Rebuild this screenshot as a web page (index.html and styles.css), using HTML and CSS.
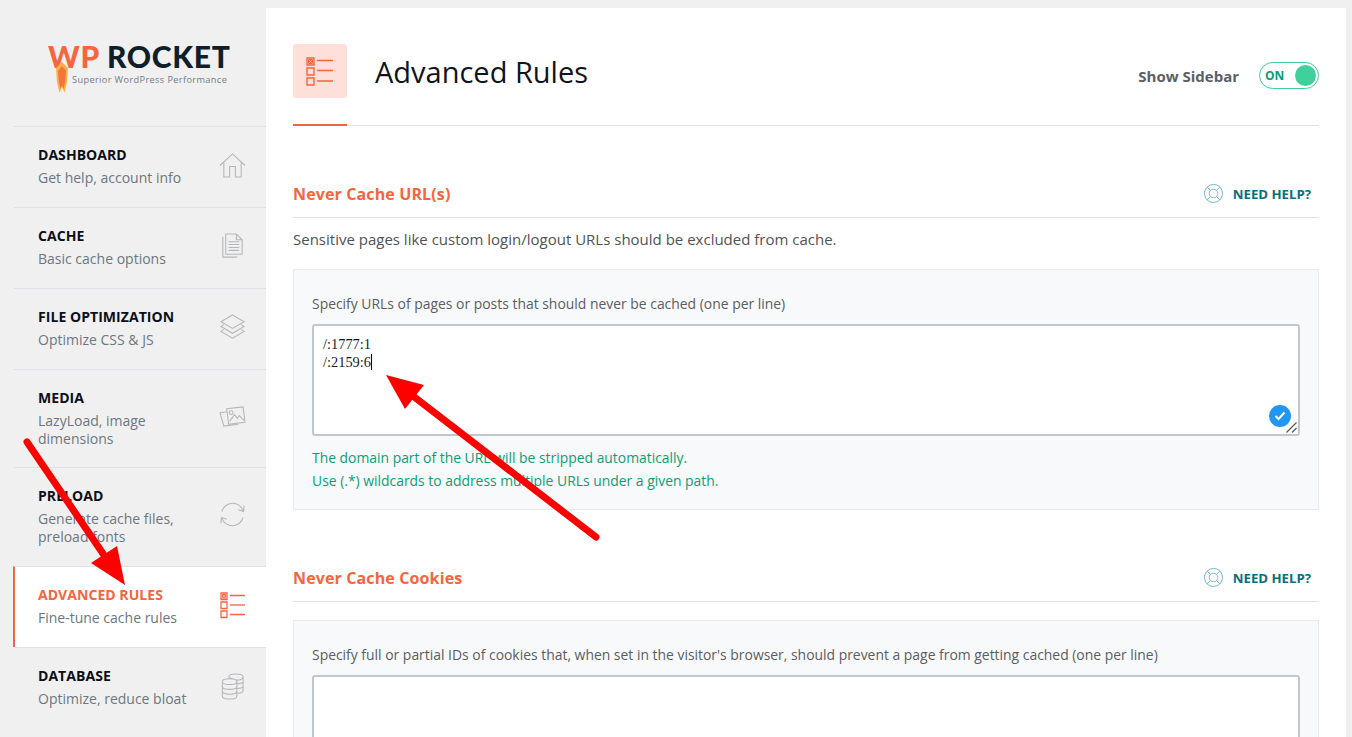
FILE: index.html
```html
<!DOCTYPE html>
<html lang="en">
<head>
<meta charset="utf-8">
<title>WP Rocket - Advanced Rules</title>
<link rel="stylesheet" href="styles.css">
</head>
<body>
<div class="app">
  <aside class="sidebar">
    <div class="logo">
      <svg class="logo-flame" viewBox="0 0 14 31" width="14" height="31">
        <path d="M7 0 L13 6 L12 20 L9.500 31 L7 25 L4.500 31 L2 20 L1 6 Z" fill="#fbb04a"/>
        <path d="M7 4 L11 9 L10 20 L8.500 27 L7 23 L5.500 27 L4 20 L3 9 Z" fill="#f4743b"/>
      </svg>
      <div class="logo-text">
        <div class="logo-main"><span class="logo-wp">WP</span> ROCKET</div>
        <div class="logo-sub">Superior WordPress Performance</div>
      </div>
    </div>
    <nav class="nav">
      <a class="nav-item h81"><div class="nav-text"><b>DASHBOARD</b><span>Get help, account info</span></div>
        <svg class="nav-icon" viewBox="0 0 28 26"><path d="M1 13 L14 1 L27 13 M5 10 V25 H11 V14 H17 V25 H23 V10" /></svg></a>
      <a class="nav-item h81"><div class="nav-text"><b>CACHE</b><span>Basic cache options</span></div>
        <svg class="nav-icon" viewBox="0 1 28 28"><path d="M7 2 H18 L24 8 V23 H7 Z M18 2 V8 H24 M4 5 V26 H19 M10 10 H21 M10 13 H21 M10 16 H21 M10 19 H21"/></svg></a>
      <a class="nav-item h81"><div class="nav-text"><b>FILE OPTIMIZATION</b><span>Optimize CSS &amp; JS</span></div>
        <svg class="nav-icon" viewBox="0 1 28 28"><path d="M14 2 L26 9 L14 16 L2 9 Z M5 12 L2 14 L14 21 L26 14 L23 12 M5 17 L2 19 L14 26 L26 19 L23 17"/></svg></a>
      <a class="nav-item h98"><div class="nav-text"><b>MEDIA</b><span>LazyLoad, image dimensions</span></div>
        <svg class="nav-icon" viewBox="0 0 28 24"><path d="M8 4 L25 2 L27 18 L10 20 Z M8 7 L1 8 L5 22 L20 20 M11 17 L16 10 L19 14 L21 11 L26 16"/><circle cx="12.500" cy="8" r="2"/></svg></a>
      <a class="nav-item h99"><div class="nav-text"><b>PRELOAD</b><span>Generate cache files, preload fonts</span></div>
        <svg class="nav-icon" viewBox="0 0 28 28"><path d="M3 11 A11.500 11.500 0 0 1 25 10 M26 5 L25.500 11 L20 9 M25 17 A11.500 11.500 0 0 1 3 18 M2 23 L2.500 17 L8 19"/></svg></a>
      <a class="nav-item h81 active"><div class="nav-text"><b>ADVANCED RULES</b><span>Fine-tune cache rules</span></div>
        <svg class="nav-icon rules" viewBox="0 0 27 27"><path d="M2 1 H8 V7.500 H2 Z M2 10 H8 V16.500 H2 Z M2 19 H8 V25.500 H2 Z M11 3.500 H26 M11 22.500 H26"/><path class="thick" d="M11 13 H26"/><path class="fill" d="M3 2 H7 V6.500 H3 Z"/><path class="cross" d="M3.500 2.500 L6.500 6 M6.500 2.500 L3.500 6"/></svg></a>
      <a class="nav-item h81"><div class="nav-text"><b>DATABASE</b><span>Optimize, reduce bloat</span></div>
        <svg class="nav-icon" viewBox="0 0 24 28"><ellipse cx="9" cy="9" rx="7.500" ry="3"/><path d="M1.500 9 V24 C1.500 28 16.500 28 16.500 24 V9 M1.500 14 C1.500 18 16.500 18 16.500 14 M1.500 19 C1.500 23 16.500 23 16.500 19 M8 4 C8 0 23 0 23 4 V18 C23 20 20 21 17 21 M8 4 C9 5 10 6 12 6 M23 4 C23 7 18 8 15 7 M17 11 C20 11 23 10 23 9 M17 16 C20 16 23 15 23 14"/></svg></a>
    </nav>
  </aside>

  <main class="main">
    <header class="page-head">
      <div class="head-icon">
        <svg class="head-rules" viewBox="0 0 28 29"><path d="M1 1 H8 V8 H1 Z M1 11 H8 V18 H1 Z M1 21 H8 V28 H1 Z M11 3.500 H27 M11 13.500 H27 M11 24 H27"/><path class="fill" d="M2 2 H7 V7 H2 Z"/><path class="cross" d="M2.500 2.500 L6.500 6.500 M6.500 2.500 L2.500 6.500"/></svg>
      </div>
      <h1>Advanced Rules</h1>
      <div class="sidebar-toggle">
        <span class="toggle-label">Show Sidebar</span>
        <span class="toggle"><span class="toggle-on">ON</span><span class="toggle-knob"></span></span>
      </div>
    </header>

    <section class="section first">
      <div class="section-head">
        <h2>Never Cache URL(s)</h2>
        <a class="help">
          <svg class="help-icon" viewBox="0 0 22 22"><circle cx="11" cy="11" r="9.500"/><circle cx="11" cy="11" r="4.500"/><path d="M4.300 4.300 L7.800 7.800 M17.700 4.300 L14.200 7.800 M4.300 17.700 L7.800 14.200 M17.700 17.700 L14.200 14.200"/></svg>
          NEED HELP?
        </a>
      </div>
      <p class="desc">Sensitive pages like custom login/logout URLs should be excluded from cache.</p>
      <div class="panel">
        <label class="field-label">Specify URLs of pages or posts that should never be cached (one per line)</label>
        <div class="field">
          <textarea class="area" spellcheck="false">/:1777:1
/:2159:6</textarea>
          <span class="caret"></span>
          <span class="valid"><svg viewBox="0 0 12 10" width="12" height="10"><path d="M1.500 5 L4.500 8 L10.500 1.500"/></svg></span>
          <svg class="grip" viewBox="0 0 11 11" width="11" height="11"><path d="M0.500 10.500 L10.500 0.500 M6 10.500 L10.500 6"/></svg>
        </div>
        <p class="hint">The domain part of the URL will be stripped automatically.<br>Use (.*) wildcards to address multiple URLs under a given path.</p>
      </div>
    </section>

    <section class="section second">
      <div class="section-head">
        <h2>Never Cache Cookies</h2>
        <a class="help">
          <svg class="help-icon" viewBox="0 0 22 22"><circle cx="11" cy="11" r="9.500"/><circle cx="11" cy="11" r="4.500"/><path d="M4.300 4.300 L7.800 7.800 M17.700 4.300 L14.200 7.800 M4.300 17.700 L7.800 14.200 M17.700 17.700 L14.200 14.200"/></svg>
          NEED HELP?
        </a>
      </div>
      <div class="panel panel-gap">
        <label class="field-label">Specify full or partial IDs of cookies that, when set in the visitor's browser, should prevent a page from getting cached (one per line)</label>
        <div class="field"><textarea class="area" spellcheck="false"></textarea></div>
      </div>
    </section>
  </main>
</div>

<svg class="arrows" viewBox="0 0 1352 737" width="1352" height="737">
  <path class="shaft" d="M27 442 L108 561"/>
  <path class="head" d="M91 563 L117 546 L125 585 Z"/>
  <path class="shaft" d="M596 537 L413 396"/>
  <path class="head" d="M386 375 L424 385 L405 409 Z"/>
</svg>
</body>
</html>
```
FILE: styles.css
```css
* { box-sizing: border-box; }
html, body { margin: 0; height: 737px; overflow: hidden; }
body {
  background: #f0f0f0;
  font-family: "Open Sans", "Noto Sans", sans-serif;
  position: relative;
}
.app { display: flex; height: 737px; overflow: hidden; }

/* sidebar */
.sidebar { width: 266px; flex: none; padding-left: 14px; }
.logo { height: 126px; display: flex; padding: 38px 0 0 34px; position: relative; }
.logo-flame { position: absolute; left: 41px; top: 62px; }
.logo-text { display: flex; flex-direction: column; }
.logo-main {
  font-family: "Lato", "Open Sans", sans-serif;
  font-weight: 900;
  font-size: 30px;
  line-height: 36px;
  color: #0f1f2a;
  letter-spacing: 0.7px;
  white-space: nowrap;
}
.logo-wp { color: #f56640; }
.logo-sub {
  font-size: 9.200px;
  line-height: 12px;
  font-weight: 500;
  color: #737b83;
  margin: 0 0 0 24px;
  letter-spacing: 0.38px;
  white-space: nowrap;
}
.nav { display: flex; flex-direction: column; }
.nav-item {
  display: flex;
  justify-content: space-between;
  border-top: 1px solid #e0e1e6;
  padding: 18px 20px 0 24px;
}
.h81 { height: 81px; }
.h98 { height: 98px; }
.h99 { height: 99px; }
.nav-text { width: 150px; display: flex; flex-direction: column; }
.nav-text b { font-size: 14px; line-height: 20px; font-weight: 700; color: #0b0f18; letter-spacing: 0.05px; white-space: nowrap; }
.nav-text span { font-size: 14px; line-height: 18px; color: #6d7680; margin-top: 4px; }
.nav-icon {
  width: 27px;
  height: 27px;
  margin-top: 7px;
  fill: none;
  stroke: #b4b6ba;
  stroke-width: 1.100;
}
.h98 .nav-icon, .h99 .nav-icon { margin-top: 15px; }
.nav-item.active { background: #fff; border-left: 2px solid #f56640; margin-left: -1px; padding-left: 23px; }
.nav-item.active b { color: #f56640; }
.nav-icon.rules { stroke: #f56640; stroke-width: 1.300; }
.nav-icon.rules .thick { stroke: #f99a84; stroke-width: 2; }
.fill { fill: #f56640; stroke: none; }
.nav-icon.rules .cross, .head-rules .cross { stroke: #ffd3c9; stroke-width: 0.700; }

/* main */
.main {
  width: 1080px;
  flex: none;
  margin-top: 8px;
  background: #fff;
  padding: 0 27px;
}
.page-head {
  height: 118px;
  display: flex;
  align-items: flex-start;
  border-bottom: 1px solid #e3e3e3;
  position: relative;
  padding-top: 36px;
}
.page-head::after {
  content: "";
  position: absolute;
  left: 0;
  bottom: -1px;
  width: 54px;
  height: 2px;
  background: #f56640;
}
.head-icon {
  width: 54px;
  height: 54px;
  border-radius: 3px;
  background: #ffdfd9;
  display: flex;
  align-items: center;
  justify-content: center;
}
.head-rules { width: 28px; height: 29px; fill: none; stroke: #f56640; stroke-width: 1.400; }
h1 {
  margin: 8px 0 0 28px;
  font-size: 29px;
  line-height: 40px;
  font-weight: 400;
  color: #10141c;
  flex: 1;
}
.sidebar-toggle { display: flex; align-items: center; gap: 20px; margin-top: 18px; }
.toggle-label { font-size: 15px; font-weight: 700; color: #5d5f66; }
.toggle {
  width: 60px;
  height: 27px;
  border: 1px solid #3fd09c;
  border-radius: 14px;
  display: flex;
  align-items: center;
  justify-content: space-between;
  padding: 0 2px 0 5px;
}
.toggle-on { font-size: 12px; font-weight: 700; color: #0a9d72; }
.toggle-knob { width: 21px; height: 21px; border-radius: 50%; background: #3fd09c; }

.section.first { padding-top: 52px; }
.section.second { padding-top: 52px; }
.section-head {
  display: flex;
  justify-content: space-between;
  align-items: center;
  height: 40px;
  border-bottom: 1px solid #e3e3e3;
  padding-bottom: 8px;
}
h2 { margin: 0; font-size: 16px; font-weight: 700; color: #f56640; letter-spacing: 0.13px; }
.help {
  display: flex;
  align-items: center;
  gap: 9px;
  font-size: 13.200px;
  font-weight: 700;
  color: #0a6c82;
  padding-right: 8px;
}
.help-icon { width: 21px; height: 21px; fill: none; stroke: #74b6d0; stroke-width: 1; }
.desc { margin: 11px 0 19px; font-size: 15px; line-height: 21px; color: #4f5358; }
.panel {
  background: #f8f9fb;
  border: 1px solid #e8eaee;
  padding: 24px 18px;
  height: 241px;
}
.panel-gap { margin-top: 18px; height: 200px; }
.field-label { display: block; font-size: 13.920px; line-height: 20px; color: #5a5d63; margin-bottom: 10px; }
.field { position: relative; height: 112px; }
.area {
  display: block;
  width: 100%;
  height: 112px;
  border: 2px solid #bfc7d2;
  border-radius: 3px;
  background: #fff;
  padding: 9px 9px 9px;
  font-family: "Liberation Serif", serif;
  font-size: 14.400px;
  line-height: 18px;
  color: #1a1a1a;
  outline: none;
  resize: none;
}
.caret { position: absolute; left: 59px; top: 30px; width: 1px; height: 16px; background: #000; }
.valid {
  position: absolute;
  right: 9px;
  bottom: 9px;
  width: 22px;
  height: 22px;
  border-radius: 50%;
  background: #2196f3;
  display: flex;
  align-items: center;
  justify-content: center;
}
.valid svg { fill: none; stroke: #fff; stroke-width: 2; }
.grip { position: absolute; right: 3px; bottom: 3px; fill: none; stroke: #555; stroke-width: 1.200; }
.hint { margin: 10px 0 0; font-size: 13.900px; line-height: 23px; color: #0c9e73; }

/* annotation arrows over the page */
.arrows { position: absolute; left: 0; top: 0; pointer-events: none; }
.shaft { fill: none; stroke: #fe0000; stroke-width: 7; stroke-linecap: round; }
.head { fill: #fe0000; }
```
